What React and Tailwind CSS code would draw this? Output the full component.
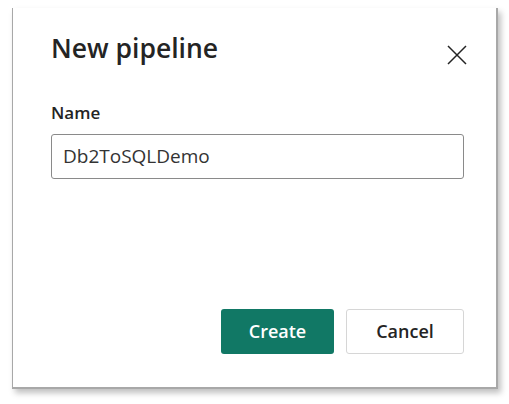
export default function App() {
  return (
    <div className="w-[509px] h-[404px] bg-white pt-[8px] pl-[12px]" style={{ fontFamily: '"Open Sans", "Noto Sans", sans-serif' }}>
      <div className="w-[486px] h-[381px] bg-white border-l border-r-2 border-b-2 border-[#a8a8a8] shadow-[3px_4px_6px_rgba(0,0,0,0.25)] flex flex-col pl-[38px] pr-[32px]">
        <div className="flex items-start justify-between pt-[27px]">
          <h1 className="text-[26.5px] font-semibold text-[#242424] leading-none">New pipeline</h1>
          <svg width="20" height="20" viewBox="0 0 20 20" className="mr-[-3px] mt-[10px]">
            <path d="M1 1 L19 19 M19 1 L1 19" stroke="#242424" strokeWidth="1.5" fill="none" />
          </svg>
        </div>
        <label className="mt-[39px] text-[17px] font-semibold text-[#242424] leading-none">Name</label>
        <div className="mt-[13px] h-[45px] border border-[#8a8a8a] rounded-[3px] flex items-center px-[11px] text-[19px] text-[#333]">
          Db2ToSQLDemo
        </div>
        <div className="flex-1" />
        <div className="flex justify-end gap-[12px] mb-[33px]">
          <button className="w-[113px] h-[45px] rounded-[3px] bg-[#117865] text-white text-[18px] font-semibold">Create</button>
          <button className="w-[118px] h-[45px] rounded-[3px] bg-white border border-[#d6d6d6] text-[#242424] text-[18px] font-semibold">Cancel</button>
        </div>
      </div>
    </div>
  )
}
